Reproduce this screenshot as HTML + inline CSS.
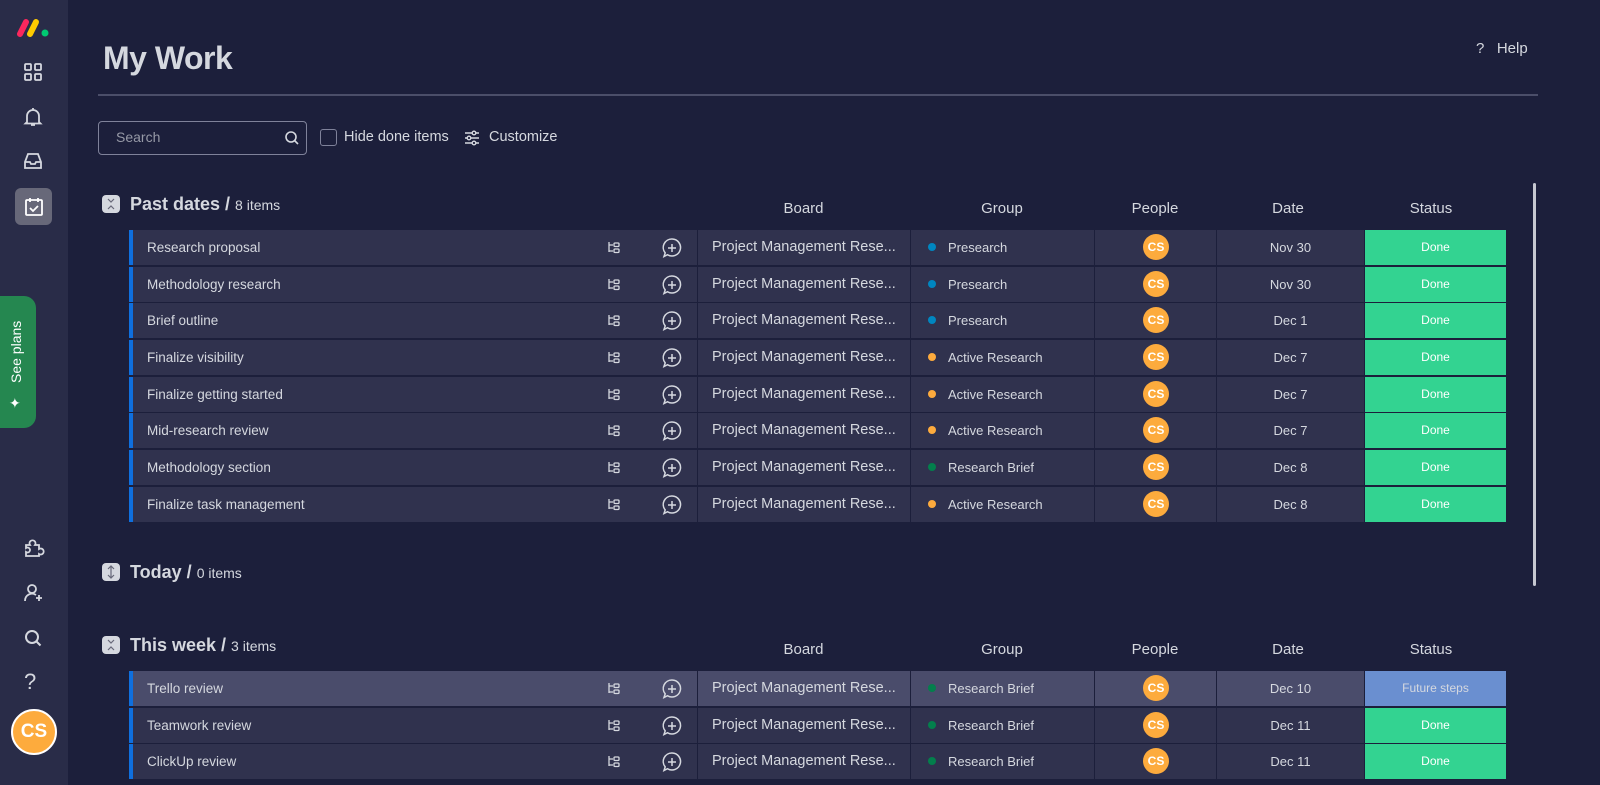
<!DOCTYPE html>
<html><head><style>
*{box-sizing:border-box;margin:0;padding:0}
body{width:1600px;height:785px;overflow:hidden;background:#1c1f3b;font-family:"Liberation Sans",sans-serif;color:#d5d8df;position:relative}
.side{position:absolute;left:0;top:0;width:68px;height:785px;background:#292c48}
.ic{position:absolute;left:20px;width:26px;height:26px}
.abs{position:absolute}
h1{position:absolute;left:103px;top:40px;font-size:32px;font-weight:bold;color:#d5d8df;letter-spacing:-0.5px}
.row{position:absolute;left:129px;width:1373px;height:35px;background:#30324e;border-left:4px solid #0f6fde;font-size:13.5px}
.row div{position:absolute;top:0;height:35px;line-height:35px}
.c{border-left:1px solid #1c1f3b}
.st{background:#33d391;color:#fff;text-align:center;font-size:12px;left:1231px;width:142px}
.av{position:absolute;width:26px;height:26px;border-radius:50%;background:#fdab3d;color:#fff;font-weight:bold;font-size:12px;text-align:center;line-height:26px;top:5px}
.dot{display:inline-block;width:8px;height:8px;border-radius:50%;margin-right:12px;vertical-align:1px}
.hd{position:absolute;font-size:15px;color:#d5d8df;text-align:center}
.sec{position:absolute;left:130px;font-size:18px;font-weight:bold;color:#d5d8df}
.sec span{font-size:14px;font-weight:normal}
.tog{position:absolute;left:102px;width:18px;height:18px;background:#d5d8df;border-radius:4px}
</style></head><body>
<div class="side">
 <svg class="abs" style="left:16px;top:16px" width="36" height="24" viewBox="0 0 36 24"><line x1="4" y1="18" x2="10" y2="6" stroke="#fb275d" stroke-width="6" stroke-linecap="round"/><line x1="14" y1="18" x2="20" y2="6" stroke="#ffcb00" stroke-width="6" stroke-linecap="round"/><circle cx="29" cy="17" r="3.5" fill="#00ca72"/></svg>
 <svg class="ic" style="top:59px" viewBox="0 0 26 26" fill="none" stroke="#d5d8df" stroke-width="1.8"><rect x="5" y="5" width="6" height="6" rx="1"/><rect x="15" y="5" width="6" height="6" rx="1"/><rect x="5" y="15" width="6" height="6" rx="1"/><rect x="15" y="15" width="6" height="6" rx="1"/></svg>
 <svg class="ic" style="top:104px" viewBox="0 0 26 26" fill="none" stroke="#d5d8df" stroke-width="1.8"><path d="M7 18V12a6 6 0 0 1 12 0v6l1.5 1.5h-15zM11 21h4M13 4v2"/></svg>
 <svg class="ic" style="top:148px" viewBox="0 0 26 26" fill="none" stroke="#d5d8df" stroke-width="1.8"><path d="M5 14l3-8h10l3 8v6H5zM5 14h5l1 2h4l1-2h5"/></svg>
 <div class="abs" style="left:15px;top:188px;width:37px;height:37px;background:#676879;border-radius:6px"></div>
 <svg class="ic" style="top:194px;left:21px" viewBox="0 0 26 26" fill="none" stroke="#fff" stroke-width="1.8"><rect x="5" y="6" width="16" height="15" rx="1"/><path d="M9 4v4M17 4v4M9 14l3 3 5-5"/></svg>
 <div class="abs" style="left:0;top:296px;width:36px;height:132px;background:#258750;border-radius:0 12px 12px 0"></div>
 <div class="abs" style="left:-14px;top:345px;width:60px;transform:rotate(-90deg);color:#fff;font-size:14px;white-space:nowrap">See plans</div>
 <div class="abs" style="left:9px;top:395px;color:#fff;font-size:14px">✦</div>
 <svg class="ic" style="top:535px" viewBox="0 0 26 26" fill="none" stroke="#d5d8df" stroke-width="1.8"><path d="M6 10h4a3 3 0 1 1 5 0h4v4a3 3 0 1 1 0 5v2H6v-4a2.5 2.5 0 1 0 0-4z"/></svg>
 <svg class="ic" style="top:580px" viewBox="0 0 26 26" fill="none" stroke="#d5d8df" stroke-width="1.8"><circle cx="12" cy="9" r="4"/><path d="M5 21a7 7 0 0 1 11-6M19 15v6M16 18h6"/></svg>
 <svg class="ic" style="top:625px" viewBox="0 0 26 26" fill="none" stroke="#d5d8df" stroke-width="2"><circle cx="12" cy="12" r="6"/><path d="M16.5 16.5l4 4"/></svg>
 <div class="abs" style="left:24px;top:669px;font-size:22px;color:#d5d8df">?</div>
 <div class="abs" style="left:11px;top:709px;width:46px;height:46px;border-radius:50%;background:#fdab3d;border:2px solid #fff;color:#fff;font-weight:bold;font-size:19px;text-align:center;line-height:42px">CS</div>
</div>
<h1>My Work</h1>
<div class="abs" style="left:1476px;top:40px;font-size:15px">?&nbsp;&nbsp; Help</div>
<div class="abs" style="left:98px;top:94px;width:1440px;height:2px;background:#4b4e69"></div>
<div class="abs" style="left:98px;top:121px;width:209px;height:34px;border:1px solid #7f829a;border-radius:4px;font-size:14px;color:#9699a6;padding:7px 0 0 17px">Search
 <svg class="abs" style="left:185px;top:8px" width="16" height="16" viewBox="0 0 16 16" fill="none" stroke="#d5d8df" stroke-width="1.6"><circle cx="7" cy="7" r="5"/><path d="M11 11l3 3"/></svg></div>
<div class="abs" style="left:320px;top:129px;width:17px;height:17px;border:1px solid #7f829a;border-radius:3px"></div>
<div class="abs" style="left:344px;top:129px;font-size:14.5px">Hide done items</div>
<svg class="abs" style="left:464px;top:130px" width="16" height="16" viewBox="0 0 16 16" stroke="#d5d8df" stroke-width="1.4" fill="#1c1f3b"><path d="M1 3h14M1 8h14M1 13h14"/><circle cx="10" cy="3" r="1.8"/><circle cx="5" cy="8" r="1.8"/><circle cx="10" cy="13" r="1.8"/></svg>
<div class="abs" style="left:489px;top:129px;font-size:14.5px">Customize</div>
<div class="abs" style="left:1533px;top:183px;width:3px;height:403px;background:#c5c7d0;border-radius:2px"></div>

<div class="tog" style="top:195px"><svg width="18" height="18" viewBox="0 0 18 18" fill="none" stroke="#676879" stroke-width="1.2"><path d="M6 4l3 3 3-3M6 14l3-3 3 3"/></svg></div><div class="sec" style="top:194px">Past dates / <span>8 items</span></div>
<div class="hd" style="left:697px;width:213px;top:200px">Board</div><div class="hd" style="left:910px;width:184px;top:200px">Group</div><div class="hd" style="left:1094px;width:122px;top:200px">People</div><div class="hd" style="left:1216px;width:144px;top:200px">Date</div><div class="hd" style="left:1360px;width:142px;top:200px">Status</div>

<div class="tog" style="top:563px"><svg width="18" height="18" viewBox="0 0 18 18" fill="none" stroke="#676879" stroke-width="1.2"><path d="M6 6l3-3 3 3M6 12l3 3 3-3M9 3v12"/></svg></div><div class="sec" style="top:562px">Today / <span>0 items</span></div>
<div class="tog" style="top:636px"><svg width="18" height="18" viewBox="0 0 18 18" fill="none" stroke="#676879" stroke-width="1.2"><path d="M6 4l3 3 3-3M6 14l3-3 3 3"/></svg></div><div class="sec" style="top:635px">This week / <span>3 items</span></div>
<div class="hd" style="left:697px;width:213px;top:641px">Board</div><div class="hd" style="left:910px;width:184px;top:641px">Group</div><div class="hd" style="left:1094px;width:122px;top:641px">People</div><div class="hd" style="left:1216px;width:144px;top:641px">Date</div><div class="hd" style="left:1360px;width:142px;top:641px">Status</div>

<div id="rows"></div>
<script>
var R=[[230,"Research proposal","Presearch","#0086c0","Nov 30"],[267,"Methodology research","Presearch","#0086c0","Nov 30"],[303,"Brief outline","Presearch","#0086c0","Dec 1"],[340,"Finalize visibility","Active Research","#fdab3d","Dec 7"],[377,"Finalize getting started","Active Research","#fdab3d","Dec 7"],[413,"Mid-research review","Active Research","#fdab3d","Dec 7"],[450,"Methodology section","Research Brief","#037f4c","Dec 8"],[487,"Finalize task management","Active Research","#fdab3d","Dec 8"],[671,"Trello review","Research Brief","#037f4c","Dec 10",1],[708,"Teamwork review","Research Brief","#037f4c","Dec 11"],[744,"ClickUp review","Research Brief","#037f4c","Dec 11"]];
var h="";R.forEach(function(r){var bg=r[5]?"#4a4c6b":"#30324e";
h+='<div class="row" style="top:'+r[0]+'px;background:'+bg+'"><div style="left:14px">'+r[1]+'</div>'+
'<svg style="position:absolute;left:474px;top:11px" width="14" height="14" viewBox="0 0 14 14" fill="none" stroke="#d5d8df" stroke-width="1.3"><path d="M2 1v10M2 4h4M2 10h4"/><rect x="7" y="2" width="5" height="3.5" rx="1"/><rect x="7" y="8" width="5" height="3.5" rx="1"/></svg>'+
'<svg style="position:absolute;left:528px;top:7px" width="22" height="22" viewBox="0 0 22 22" fill="none" stroke="#d5d8df" stroke-width="1.5"><path d="M11 2a8.5 8.5 0 1 1-4.5 15.7L3 19.5l1.2-3.6A8.5 8.5 0 0 1 11 2zM11 7v8M7 11h8"/></svg>'+
'<div class="c" style="left:564px;width:213px;padding-left:14px;font-size:14.5px;color:#d5d8df">Project Management Rese...</div>'+
'<div class="c" style="left:777px;width:184px;padding-left:17px;font-size:13px"><span class="dot" style="background:'+r[3]+'"></span>'+r[2]+'</div>'+
'<div class="c" style="left:961px;width:122px"><span class="av" style="left:48px;top:4px">CS</span></div>'+
'<div class="c" style="left:1083px;width:148px;text-align:center;font-size:13px">'+r[4]+'</div>'+
(r[5]?'<div class="st c" style="background:#6a8fd0;color:#d5d8df">Future steps</div>':'<div class="st c">Done</div>')+'</div>';});
document.getElementById("rows").innerHTML=h;
</script>
</body></html>
